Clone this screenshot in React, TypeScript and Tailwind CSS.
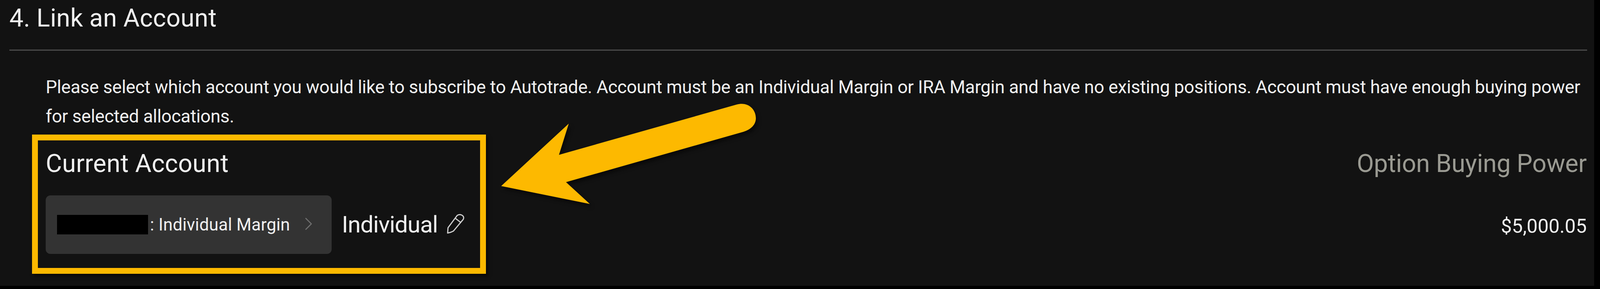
import { ChevronRight } from "lucide-react";

// NOTE: the page really opens 4096px wide, not the 4188px of the reference,
// so x positions here are the reference's times ~0.978. y positions are unchanged.

function PencilIcon() {
  return (
    <svg
      viewBox="0 0 46 52"
      className="w-[45px] h-[52px] ml-[23px] mt-[-4px]"
      fill="none"
      stroke="#cfcfcf"
      strokeWidth="3"
      strokeLinejoin="round"
      strokeLinecap="round"
    >
      <path d="M2 50 L3 36 L27 4 Q32 0 39 3 Q46 7 43 14 L17 45 Q10 49 2 50 Z" />
      <path d="M23 12 L36 22" />
    </svg>
  );
}

function Arrow() {
  return (
    <svg
      viewBox="0 0 680 280"
      className="absolute left-[1270px] top-[255px] w-[680px] h-[280px] drop-shadow-[5px_7px_5px_rgba(0,0,0,0.55)]"
    >
      <path
        fill="#fdb900"
        d="M13 222 L186 62 L161 142 L616 13 C 645 5 665 25 665 48 C 665 65 652 77 633 83 L179 212 L240 268 Z"
      />
    </svg>
  );
}

export default function App() {
  return (
    <div className="flex h-[741px] w-full overflow-hidden bg-black pr-[15px] pb-[8px] font-['Roboto',sans-serif]">
      <div className="relative flex-1 bg-[#121212] text-[#f0f0f0]">
        <div className="ml-[24px] mr-[18px] h-[130px] border-b-[3px] border-[#4a4a4a] pt-[3px]">
          <h2 className="text-[64px] leading-[88px] tracking-[0.3px]">4. Link an Account</h2>
        </div>

        <div className="pl-[117px] pr-[19px]">
          <p className="mt-[56px] text-[46px] leading-[75px] tracking-[-0.32px]">
            Please select which account you would like to subscribe to Autotrade. Account must be an
            Individual Margin or IRA Margin and have no existing positions. Account must have enough
            buying power for selected allocations.
          </p>

          <div className="flex justify-between">
            <div className="mt-[49px]">
              <h3 className="text-[64px] leading-[70px] tracking-[0.4px]">Current Account</h3>
              <div className="mt-[46px] flex items-center">
                <div className="flex h-[150px] w-[732px] items-center rounded-[12px] bg-[#333333] pl-[29px]">
                  <span className="h-[50px] w-[233px] bg-black" />
                  <span className="ml-[5px] text-[44px] tracking-[0.1px]">: Individual Margin</span>
                  <ChevronRight className="ml-[20px] mt-[-4px] h-[56px] w-[56px] text-[#6f6f6f]" strokeWidth={1.2} />
                </div>
                <span className="ml-[26px] text-[60px] tracking-[-1px]">Individual</span>
                <PencilIcon />
              </div>
            </div>

            <div className="mt-[49px] flex flex-col items-end">
              <h3 className="text-[64px] leading-[70px] tracking-[-0.2px] text-[#9a9a92]">Option Buying Power</h3>
              <div className="mt-[46px] flex h-[150px] items-center pt-[8px] text-[50px]">$5,000.05</div>
            </div>
          </div>
        </div>

        {/* annotation drawn over the screenshot */}
        <div className="absolute left-[82px] top-[345px] h-[357px] w-[1162px] border-[15px] border-[#fdb900] shadow-[5px_6px_8px_rgba(0,0,0,0.55)]" />
        <Arrow />
      </div>
    </div>
  );
}
